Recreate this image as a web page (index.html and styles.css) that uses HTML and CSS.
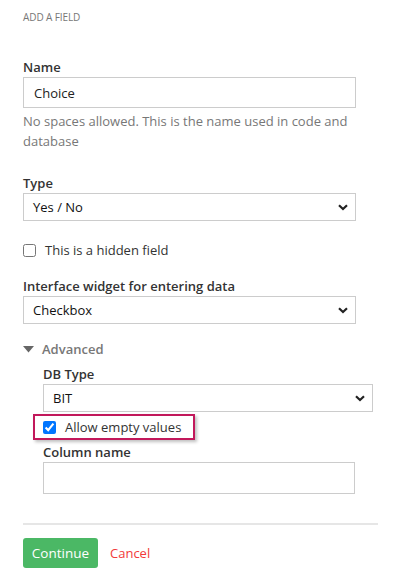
FILE: index.html
```html
<!DOCTYPE html>
<html>
<head>
<meta charset="utf-8">
<link rel="stylesheet" href="styles.css">
</head>
<body>
<div class="page">
  <div class="title">ADD A FIELD</div>

  <div class="field name-field">
    <label class="label">Name</label>
    <div class="input input-name">Choice</div>
    <div class="help">No spaces allowed. This is the name used in code and database</div>
  </div>

  <div class="field type-field">
    <label class="label">Type</label>
    <div class="select">
      <span>Yes / No</span>
      <svg class="chev" width="10" height="7" viewBox="0 0 10 7"><path d="M1 1.2 L5 5 L9 1.2" fill="none" stroke="#222" stroke-width="2.2"/></svg>
    </div>
  </div>

  <div class="check-row hidden-row">
    <input type="checkbox" class="cb">
    <span>This is a hidden field</span>
  </div>

  <div class="field widget-field">
    <label class="label">Interface widget for entering data</label>
    <div class="select">
      <span>Checkbox</span>
      <svg class="chev" width="10" height="7" viewBox="0 0 10 7"><path d="M1 1.2 L5 5 L9 1.2" fill="none" stroke="#222" stroke-width="2.2"/></svg>
    </div>
  </div>

  <div class="advanced">
    <div class="adv-head">
      <svg class="tri" width="11" height="7" viewBox="0 0 11 7"><path d="M0 0 H11 L5.5 6.5 Z" fill="#666"/></svg>
      <span>Advanced</span>
    </div>
    <div class="adv-body">
      <div class="field db-field">
        <label class="label">DB Type</label>
        <div class="select select-wide">
          <span>BIT</span>
          <svg class="chev" width="10" height="7" viewBox="0 0 10 7"><path d="M1 1.2 L5 5 L9 1.2" fill="none" stroke="#222" stroke-width="2.2"/></svg>
        </div>
      </div>
      <div class="highlight">
        <input type="checkbox" class="cb" checked>
        <span>Allow empty values</span>
      </div>
      <div class="field col-field">
        <label class="label">Column name</label>
        <div class="input input-col"></div>
      </div>
    </div>
  </div>

  <hr class="sep">

  <div class="actions">
    <button class="btn">Continue</button>
    <a class="cancel">Cancel</a>
  </div>
</div>
</body>
</html>
```
FILE: styles.css
```css
html, body {
  margin: 0;
  padding: 0;
  background: #fff;
}
body {
  font-family: "Open Sans", "Liberation Sans", sans-serif;
  font-size: 13px;
  color: #333;
}
.page {
  padding: 10px 0 0 23px;
  width: 355px;
}
.title {
  font-size: 10px;
  line-height: 14px;
  color: #777;
  letter-spacing: -0.1px;
}
.field {
  display: flex;
  flex-direction: column;
}
.label {
  font-weight: 600;
  line-height: 18px;
  margin-bottom: 1px;
  color: #333;
}
.name-field { margin-top: 34px; }
.input {
  box-sizing: border-box;
  border: 1px solid #ccc;
  background: #fff;
  padding: 0 10px;
  display: flex;
  align-items: center;
  color: #222;
}
.input-name { width: 333px; height: 31px; }
.help {
  margin-top: 3px;
  line-height: 20px;
  color: #777;
  width: 333px;
}
.type-field { margin-top: 23px; }
.select {
  position: relative;
  box-sizing: border-box;
  width: 333px;
  height: 28px;
  border: 1px solid #ccc;
  padding: 0 9px;
  display: flex;
  align-items: center;
  color: #111;
}
.select-wide { width: 330px; }
.chev {
  position: absolute;
  right: 7px;
  top: 10px;
}
.check-row {
  display: flex;
  align-items: center;
  margin-top: 20px;
  height: 18px;
}
.cb {
  margin: 0 9px 0 0;
  width: 13px;
  height: 13px;
}
.widget-field { margin-top: 18px; }
.advanced { margin-top: 16px; }
.adv-head {
  display: flex;
  align-items: center;
  height: 18px;
  color: #777;
  font-weight: 600;
}
.tri { margin-right: 8px; }
.adv-body {
  padding-left: 20px;
  margin-top: 7px;
}
.highlight {
  display: flex;
  align-items: center;
  box-sizing: border-box;
  width: 162px;
  height: 26px;
  margin: 2px 0 0 -10px;
  padding-left: 8px;
  border: 2px solid #c2185b;
  box-shadow: 2px 2px 3px rgba(0,0,0,0.25);
  color: #333;
}
.col-field { margin-top: 3px; }
.input-col { width: 312px; height: 32px; }
.sep {
  margin: 29px 0 0 0;
  border: 0;
  border-top: 2px solid #e6e6e6;
  width: 355px;
}
.actions {
  display: flex;
  align-items: center;
  margin-top: 13px;
}
.btn {
  font-family: inherit;
  font-size: 13.5px;
  background: #4bb865;
  color: #fff;
  border: 0;
  border-radius: 3px;
  width: 75px;
  height: 30px;
  padding: 0;
}
.cancel {
  margin-left: 12px;
  color: #f23a3a;
  font-size: 13px;
}
```
